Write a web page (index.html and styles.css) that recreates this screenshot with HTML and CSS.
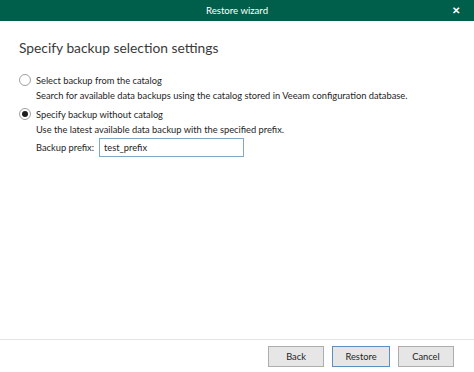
FILE: index.html
```html
<!DOCTYPE html>
<html lang="en">
<head>
    <meta charset="UTF-8">
    <title>Restore wizard</title>
    <link rel="stylesheet" href="styles.css">
</head>
<body>
    <div class="window">
        <div class="titlebar">
            <span class="title">Restore wizard</span>
            <span class="close">&#10005;</span>
        </div>

        <div class="content">
            <h1>Specify backup selection settings</h1>

            <div class="option">
                <label class="radio-row">
                    <span class="radio"></span>
                    <span>Select backup from the catalog</span>
                </label>
                <p class="hint">Search for available data backups using the catalog stored in Veeam configuration database.</p>
            </div>

            <div class="option">
                <label class="radio-row">
                    <span class="radio checked"></span>
                    <span>Specify backup without catalog</span>
                </label>
                <p class="hint">Use the latest available data backup with the specified prefix.</p>
                <div class="prefix-row">
                    <span class="prefix-label">Backup prefix:</span>
                    <input type="text" class="prefix-input" value="test_prefix">
                </div>
            </div>
        </div>

        <div class="footer">
            <button class="btn">Back</button>
            <button class="btn default">Restore</button>
            <button class="btn">Cancel</button>
        </div>
    </div>
</body>
</html>
```

FILE: styles.css
```css
* {
    margin: 0;
    padding: 0;
    box-sizing: border-box;
}

body {
    font-family: 'Lato', 'Noto Sans', sans-serif;
    font-size: 9.3px;
    color: #1e1e1e;
    background: white;
}

.window {
    width: 474px;
    height: 372px;
    display: flex;
    flex-direction: column;
}

.titlebar {
    height: 21px;
    background: #005f4b;
    color: white;
    display: flex;
    align-items: center;
    justify-content: center;
    position: relative;
}

.title {
    font-size: 9.6px;
}

.close {
    position: absolute;
    right: 14px;
    top: 4px;
    font-size: 10px;
    font-weight: bold;
}

.content {
    flex: 1;
    padding: 18px 19px 0 19px;
}

h1 {
    font-size: 13.8px;
    line-height: 18px;
    font-weight: normal;
    color: #3a3a3a;
    margin-bottom: 15px;
}

.option {
    margin-bottom: 2px;
}

.radio-row {
    display: flex;
    align-items: center;
    gap: 5px;
    height: 16px;
}

.radio {
    width: 12px;
    height: 12px;
    border: 1px solid #a0a0a0;
    border-radius: 50%;
    display: flex;
    align-items: center;
    justify-content: center;
}

.radio.checked::after {
    content: "";
    width: 6px;
    height: 6px;
    border-radius: 50%;
    background: #1e1e1e;
}

.hint {
    padding-left: 17px;
    height: 16px;
    line-height: 16px;
}

.prefix-row {
    display: flex;
    align-items: center;
    padding-left: 17px;
}

.prefix-label {
    width: 63px;
    flex-shrink: 0;
    white-space: nowrap;
}

.prefix-input {
    width: 145px;
    height: 19px;
    border: 1px solid #7ea7c8;
    padding: 0 4px;
    font-family: inherit;
    font-size: 9.3px;
    color: #1e1e1e;
    outline: none;
}

.footer {
    height: 33px;
    border-top: 1px solid #e3e3e3;
    display: flex;
    justify-content: flex-end;
    align-items: center;
    gap: 8px;
    padding-right: 20px;
}

.btn {
    width: 56px;
    height: 21px;
    background: #e6e6e6;
    border: 1px solid #adadad;
    font-family: inherit;
    font-size: 9.3px;
    color: #1e1e1e;
}

.btn.default {
    width: 58px;
    border-color: #5c8fc0;
}
```
